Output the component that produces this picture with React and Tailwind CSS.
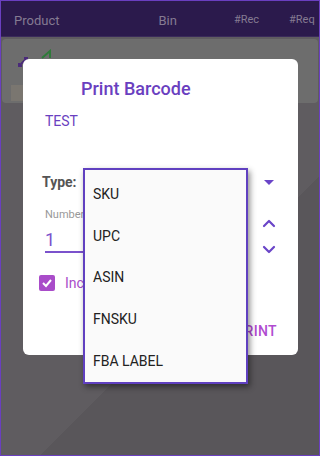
import React from 'react'

const options = ['SKU', 'UPC', 'ASIN', 'FNSKU', 'FBA LABEL']

function Header() {
  return (
    <div className="h-[36px] pt-[4px] bg-[#2b1a4c] flex items-center text-[#857b92] border-b border-[#3a2a5a]">
      <span className="ml-[13px] text-[13px]">Product</span>
      <span className="ml-[99px] text-[13px]">Bin</span>
      <span className="ml-[57px] text-[11px]">#Rec</span>
      <span className="ml-[30px] text-[11px]">#Req</span>
    </div>
  )
}

function Chevron({ up }) {
  return (
    <svg width="14" height="10" viewBox="0 0 14 10" fill="none" stroke="#6a45c8" strokeWidth="2.2" strokeLinecap="round" strokeLinejoin="round">
      {up ? <path d="M2 8 L7 3 L12 8" /> : <path d="M2 3 L7 8 L12 3" />}
    </svg>
  )
}

export default function App() {
  return (
    <div className="relative w-[320px] h-[456px] overflow-hidden border border-[#6a3fc0] bg-[#5b585c]" style={{ fontFamily: 'Roboto, "Noto Sans", sans-serif' }}>
      <Header />
      <div className="h-[420px] bg-[linear-gradient(135deg,#5f5c60_0%,#5f5c60_62%,#59565a_62%,#59565a_100%)] pt-[2px]">
        <div className="mx-[1px] h-[64px] rounded-[4px] bg-[#6d6d6d] relative">
          <svg className="absolute left-[14px] top-[16px]" width="14" height="14" viewBox="0 0 14 14" fill="none" stroke="#4a2a7a" strokeWidth="2">
            <path d="M3 11 L11 3 M8 3 H11 V6 M3 8 V11 H6" />
          </svg>
          <svg className="absolute left-[38px] top-[10px]" width="12" height="10" viewBox="0 0 12 10" fill="none" stroke="#2f7a3a" strokeWidth="2">
            <path d="M2 9 L10 2 V9" />
          </svg>
          <div className="absolute left-[9px] top-[46px] w-[13px] h-[16px] bg-[#7a7670]" />
        </div>
      </div>

      <div className="absolute left-[22px] top-[58px] w-[275px] h-[296px] rounded-[6px] bg-white">
        <div className="pl-[58px] pt-[16px] text-[18px] leading-[27px] font-medium text-[#6a3fc0]">Print Barcode</div>
        <div className="pl-[22px] mt-[9px] text-[14px] leading-[20px] text-[#6a3fc0]">TEST</div>
        <div className="flex items-center pl-[19px] mt-[41px] h-[20px]">
          <span className="text-[14px] font-bold text-[#555]">Type:</span>
          <span className="ml-auto mr-[24px] w-0 h-0 border-l-[5px] border-r-[5px] border-t-[5px] border-l-transparent border-r-transparent border-t-[#6a45c8]" />
        </div>
        <div className="flex items-start pl-[22px] mt-[16px]">
          <div className="w-[120px]">
            <div className="text-[11px] leading-[14px] text-[#999]">Number</div>
            <div className="text-[18px] text-[#7b52cc] leading-[23px] mt-[6px] border-b-2 border-[#7b52cc]">1</div>
          </div>
          <div className="ml-auto mr-[22px] flex flex-col items-center gap-[16px] mt-[10px]">
            <Chevron up />
            <Chevron />
          </div>
        </div>
        <div className="flex items-center pl-[16px] mt-[19px] gap-[10px] h-[20px]">
          <span className="w-[16px] h-[16px] rounded-[2px] bg-[#a94cc9] flex items-center justify-center">
            <svg width="12" height="12" viewBox="0 0 12 12" fill="none" stroke="white" strokeWidth="2">
              <path d="M2 6 L5 9 L10 3" />
            </svg>
          </span>
          <span className="text-[14px] text-[#a94cc9]">Include</span>
        </div>
        <div className="flex justify-end pr-[21px] mt-[28px] text-[14px] leading-[20px] font-medium text-[#b04bd0] tracking-wide">PRINT</div>
      </div>

      <div className="absolute left-[82px] top-[167px] w-[165px] h-[216px] border-2 border-[#6040c0] bg-[#fafafa] shadow-[2px_3px_6px_rgba(0,0,0,0.45)] flex flex-col pt-[4px]">
        {options.map((o) => (
          <div key={o} className="h-[42.5px] flex items-center pl-[8px] text-[14px] text-[#222]">{o}</div>
        ))}
      </div>
    </div>
  )
}
